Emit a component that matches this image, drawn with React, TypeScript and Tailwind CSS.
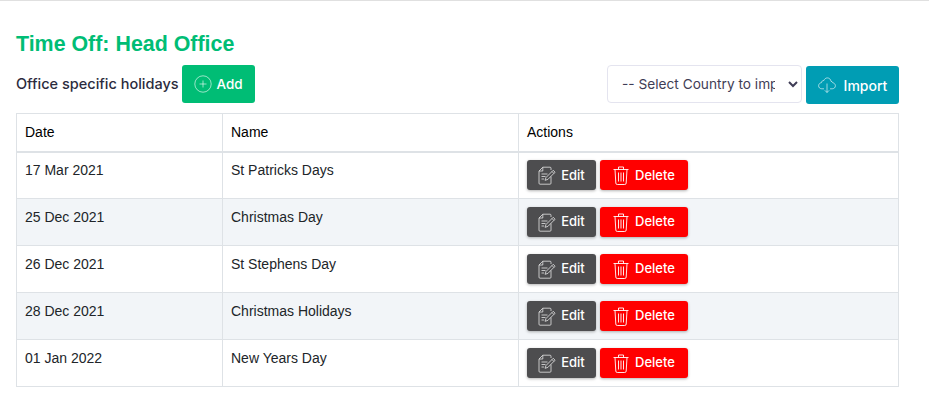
import React from 'react';

const holidays = [
  { date: '17 Mar 2021', name: 'St Patricks Days' },
  { date: '25 Dec 2021', name: 'Christmas Day' },
  { date: '26 Dec 2021', name: 'St Stephens Day' },
  { date: '28 Dec 2021', name: 'Christmas Holidays' },
  { date: '01 Jan 2022', name: 'New Years Day' },
];

const PlusCircle = () => (
  <svg className="h-[18px] w-[18px]" viewBox="0 0 18 18" fill="none" stroke="currentColor" strokeWidth="0.6" aria-hidden="true">
    <circle cx="9" cy="9" r="8.2" />
    <path d="M9 5.500v7M5.500 9h7" />
  </svg>
);

const CloudDown = () => (
  <svg className="h-[18px] w-[18px]" viewBox="0 0 18 18" fill="none" stroke="currentColor" strokeWidth="0.6" aria-hidden="true">
    <path d="M6 12.800H3.800C2 12.800.6 11.500.6 9.800c0-1.600 1.200-2.900 2.800-3.100C3.500 5.400 4.600 4.400 5.900 4.500 6.500 2.900 7.700 1.900 9.300 1.900c2 0 3.500 1.500 3.700 3.400 1 .1 1.600.7 1.800 1.500 1.500.2 2.600 1.500 2.600 3 0 1.700-1.400 3-3.200 3H12" />
    <path d="M9 7.500v9M6.800 14.300 9 16.500l2.200-2.200" />
  </svg>
);

const EditIcon = () => (
  <svg className="h-[19px] w-[18px] text-[#e4e4e4]" viewBox="0 0 18 19" fill="none" stroke="currentColor" strokeWidth="0.8" aria-hidden="true">
    <path d="M13 10.500v6.700a1 1 0 0 1-1 1H2a1 1 0 0 1-1-1V5l3.800-3.800H12a1 1 0 0 1 1 1v1.800" />
    <path d="M1 5h3.800V1.200" />
    <path d="M3.500 8h6M3.500 10.500h4M3.500 13h2.500" />
    <path d="M7 14.300l1-2.800 7.200-7.200 1.900 1.900-7.200 7.200zM14 5.500l1.900 1.900" />
  </svg>
);

const TrashIcon = () => (
  <svg className="h-[19px] w-[16px]" viewBox="0 0 16 19" fill="none" stroke="currentColor" strokeWidth="0.9" aria-hidden="true">
    <path d="M.5 3.500h15M5.500 3.500V1h5v2.500" />
    <path d="M2 3.500l.8 13.500a1.500 1.500 0 0 0 1.500 1.500h7.400a1.500 1.500 0 0 0 1.500-1.500L14 3.500" />
    <path d="M5.500 6.500v9M8 6.500v9M10.500 6.500v9" />
  </svg>
);

export default function App() {
  return (
    <div className="h-[405px] overflow-hidden border-t border-[#e0e0e0] bg-white px-4 font-['Liberation_Sans',sans-serif]">
      <h2 className="mt-[31px] text-[21.4px] leading-[24px] font-bold text-[#00bd75]">Time Off: Head Office</h2>
      <div className="mt-[9px] flex h-[39px] items-start justify-between pr-[14px]">
        <div className="flex items-center gap-[3px] font-['Inter',sans-serif]">
          <span className="text-[14.5px] font-medium text-[#2b2b3d]">Office specific holidays</span>
          <button className="flex h-[38px] w-[73px] items-center justify-center gap-[5px] rounded-[3px] bg-[#00bd75] text-[13.5px] font-medium text-white">
            <PlusCircle />
            Add
          </button>
        </div>
        <div className="flex items-start gap-1 font-['Inter',sans-serif]">
          <select className="h-[38px] w-[195px] rounded-[4px] border border-[#e4e4ef] bg-white pr-[10px] pl-[10px] text-[13.7px] text-[#3f3d56]">
            <option>-- Select Country to import</option>
          </select>
          <button className="mt-px flex h-[38px] w-[93px] items-center justify-center gap-2 rounded-[3px] bg-[#009db4] text-[14px] font-medium text-white">
            <CloudDown />
            Import
          </button>
        </div>
      </div>
      <table className="mt-[9px] w-[883px] table-fixed border-collapse text-[14px] text-[#212529]">
        <colgroup>
          <col className="w-[206px]" />
          <col className="w-[296px]" />
          <col />
        </colgroup>
        <thead>
          <tr className="h-[38px] text-black">
            <th className="border border-b-2 border-[#dee2e6] px-2 text-left font-normal">Date</th>
            <th className="border border-b-2 border-[#dee2e6] px-2 text-left font-normal">Name</th>
            <th className="border border-b-2 border-[#dee2e6] px-2 text-left font-normal">Actions</th>
          </tr>
        </thead>
        <tbody>
          {holidays.map((h, i) => (
            <tr key={h.date} className={`h-[47px] ${i % 2 === 1 ? 'bg-[#f2f5f8]' : 'bg-white'}`}>
              <td className={`border border-[#dee2e6] px-2 align-top ${i === 0 ? 'pt-[7px]' : 'pt-[8px]'}`}>{h.date}</td>
              <td className={`border border-[#dee2e6] px-2 align-top ${i === 0 ? 'pt-[7px]' : 'pt-[8px]'}`}>{h.name}</td>
              <td className="border border-[#dee2e6] px-2 align-middle">
                <div className="flex gap-1 font-['Inter',sans-serif] text-[13px] font-medium text-white">
                  <button className="flex h-[30px] w-[69px] items-center justify-center gap-[5px] rounded-[3px] bg-[#4d4d4f] shadow-[0_1px_3px_rgba(0,0,0,0.3)]">
                    <EditIcon />
                    Edit
                  </button>
                  <button className="flex h-[30px] w-[88px] items-center justify-center gap-[6px] rounded-[3px] bg-[#ff0000] shadow-[0_1px_3px_rgba(0,0,0,0.3)]">
                    <TrashIcon />
                    Delete
                  </button>
                </div>
              </td>
            </tr>
          ))}
        </tbody>
      </table>
    </div>
  );
}
